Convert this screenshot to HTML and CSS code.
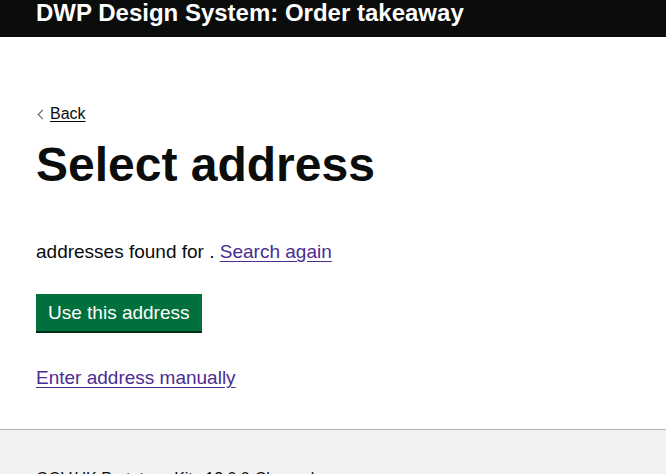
FILE: index.html
```html
<!DOCTYPE html>
<html lang="en">
<head>
<meta charset="utf-8">
<title>Select address</title>
<link rel="stylesheet" href="styles.css">
</head>
<body>
<header class="header">
  <div class="width">
    <span class="service">DWP Design System: Order takeaway</span>
  </div>
</header>
<main class="width main">
  <a class="back" href="#">Back</a>
  <h1 class="title">Select address</h1>
  <p class="body">addresses found for . <a class="link" href="#">Search again</a></p>
  <button class="button" type="button">Use this address</button>
  <p class="body manual"><a class="link" href="#">Enter address manually</a></p>
</main>
<footer class="footer">
  <div class="width footer-inner">
    <span>GOV.UK Prototype Kit v13.0.0</span>
    <a class="footer-link" href="#">Changelog</a>
  </div>
</footer>
</body>
</html>
```
FILE: styles.css
```css
html, body {
  margin: 0;
  padding: 0;
}
body {
  font-family: "Liberation Sans", Arial, sans-serif;
  color: #0b0c0c;
  background: #fff;
}
.width {
  padding: 0 36px;
}
.header {
  background: #0b0c0c;
  height: 38px;
  border-bottom: 1px solid #0b0c0c;
}
.service {
  display: block;
  color: #fff;
  font-weight: bold;
  font-size: 24px;
  line-height: 30px;
  margin-top: -2px;
}
.main {
  padding-top: 67px;
  padding-bottom: 39px;
}
.back {
  display: inline-block;
  position: relative;
  padding-left: 14px;
  font-size: 16px;
  line-height: 20px;
  color: #0b0c0c;
  text-decoration: underline;
  text-underline-offset: 2px;
}
.back::before {
  content: "";
  position: absolute;
  left: 3px;
  top: 7px;
  width: 6px;
  height: 6px;
  border-left: 1px solid #505a5f;
  border-bottom: 1px solid #505a5f;
  transform: rotate(45deg);
}
.title {
  margin: 16px 0 0;
  font-size: 48px;
  line-height: 50px;
  font-weight: bold;
}
.body {
  font-size: 19px;
  line-height: 25px;
  margin: 49px 0 0;
}
.link {
  color: #4c2c92;
  text-decoration: underline;
  text-underline-offset: 3px;
}
.button {
  display: block;
  margin-top: 30px;
  background: #00703c;
  color: #fff;
  border: 0;
  box-shadow: 0 2px 0 #002d18;
  font-family: inherit;
  font-size: 19px;
  line-height: 20px;
  padding: 9px 12px 8px;
  border-radius: 0;
}
.manual {
  margin-top: 34px;
}
.footer {
  background: #f3f2f1;
  border-top: 1px solid #b1b4b6;
  padding-top: 39px;
  padding-bottom: 40px;
}
.footer-inner {
  display: flex;
  gap: 5px;
  font-size: 16px;
  line-height: 20px;
}
.footer-link {
  color: #0b0c0c;
}
```
